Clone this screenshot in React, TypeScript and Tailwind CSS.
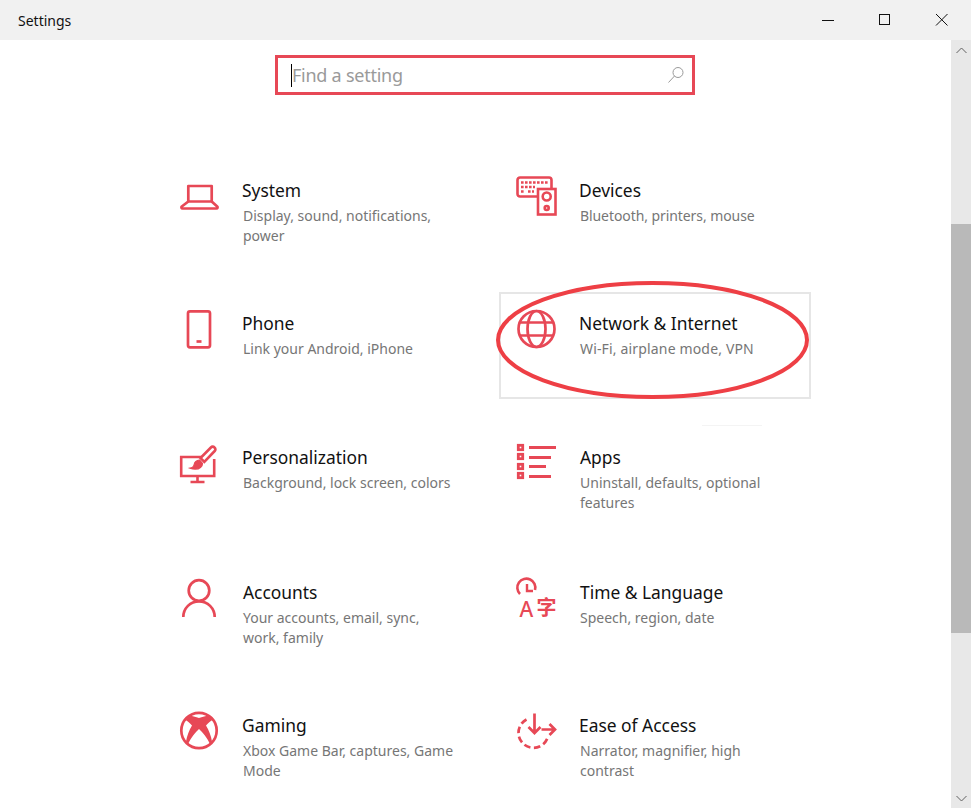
import React from "react";

const C = "#e74856";

const Icons: Record<string, React.ReactNode> = {
  system: (
    <g fill="none" stroke={C} strokeWidth="2.7" strokeLinejoin="round">
      <rect x="10.300" y="10" width="23.400" height="15.500" />
      <path d="M10.300 25.500 3.800 30.500c-.8.8-.4 2 .8 2h33.800c1.200 0 1.600-1.200.8-2L33.700 25.500" />
    </g>
  ),
  phone: (
    <g fill="none" stroke={C} strokeWidth="2.700">
      <rect x="10" y="1.300" width="22" height="36" rx="2" />
      <path d="M18.500 31.500h5" />
    </g>
  ),
  devices: (
    <g fill="none" stroke={C} strokeWidth="2.600">
      <path d="M22 20.500H5a2.500 2.500 0 0 1-2.500-2.500V4A2.500 2.500 0 0 1 5 1.500h29a2.500 2.500 0 0 1 2.500 2.500v8" />
      <rect x="23" y="13" width="17.500" height="25.500" />
      <circle cx="31.700" cy="20.500" r="4" />
      <circle cx="31.700" cy="32" r="2" />
      <path d="M6 6.500h27M6 11h14M6 15.500h4M13 15.500h6" strokeWidth="2.400" strokeDasharray="2.600 1.400" />
    </g>
  ),
  network: (
    <g fill="none" stroke={C} strokeWidth="2.700">
      <circle cx="21.500" cy="19" r="18" />
      <ellipse cx="21.500" cy="19" rx="9" ry="18" />
      <path d="M5 12.500h33M5 25.500h33" />
    </g>
  ),
  personalization: (
    <g fill="none" stroke={C} strokeWidth="2.600">
      <path d="M24 13H3.200v19h33V15" />
      <path d="M19.500 32v6M12.500 38h14" />
      <path d="M36.500 3.500c-1.300-1.300-2.600-1-3.600 0L22.500 14l3.800 3.800L36.700 7c1-1 1-2.400-.2-3.500z" />
      <path d="M21.500 16c-3 .3-4.800 1.600-5.200 4-.3 2.300-1.400 3.600-4.300 4.200 4 1.500 8.500 1 10.800-1 1.300-1.300 1.700-2.600 1.700-3.700z" fill={C} stroke={C} strokeWidth="1.200" />
    </g>
  ),
  apps: (
    <g fill="none" stroke={C} strokeWidth="2.800">
      <rect x="3.300" y="1.300" width="4.400" height="4.400" />
      <rect x="3.300" y="10.300" width="4.400" height="4.400" />
      <rect x="3.300" y="20.300" width="4.400" height="4.400" />
      <rect x="3.300" y="29.300" width="4.400" height="4.400" />
      <path d="M14 3.500h27M14 13.500h22M14 22.500h17M14 32.500h22" />
    </g>
  ),
  accounts: (
    <g fill="none" stroke={C} strokeWidth="2.700">
      <circle cx="21" cy="11.500" r="10.300" />
      <path d="M5.300 38a15.700 15.700 0 0 1 31.400 0" />
    </g>
  ),
  time: (
    <g fill="none" stroke={C}>
      <path d="M5 15A9 9 0 1 1 20 11" strokeWidth="2.600" />
      <path d="M12 5v7h6" strokeWidth="2.400" />
      <text x="4.500" y="38" fontSize="21" fontWeight="500" fill={C} stroke="none" fontFamily="'Noto Sans', sans-serif">A</text>
      <text x="21.500" y="36" fontSize="20" fontWeight="700" fill={C} stroke="none" fontFamily="'Noto Sans CJK SC', sans-serif">字</text>
    </g>
  ),
  gaming: (
    <g>
      <circle cx="21" cy="18.500" r="17.700" fill="none" stroke={C} strokeWidth="2.700" />
      <path d="M10 3.500C14 3.500 18 5 21 6 24 5 28 3.500 32 3.500L35.500 7C33 9 30 11 28 13.500 31 18 33 24 34 29.500L32 32C29 26 25 20.500 21 17 17 20.500 13 26 10 32L8 29.500C9 24 11 18 14 13.500 12 11 9 9 6.500 7z" fill={C} />
    </g>
  ),
  ease: (
    <g fill="none" stroke={C} strokeWidth="2.700">
      <path d="M11.500 7.500A15 15 0 1 0 33 24.500" strokeDasharray="6.500 3.500" />
      <path d="M19.500 1.500v19M13.500 15l6 6 6-6" />
      <path d="M26.500 17.500h13M34.500 12l5.500 5.500-5.500 5.500" />
    </g>
  ),
};

type Item = { id: string; title: string; sub: string; tx?: string; sx?: string; ic?: string; active?: boolean };

const items: Item[] = [
  { id: "system", title: "System", sub: "Display, sound, notifications, power", tx: "-ml-px" },
  { id: "devices", title: "Devices", sub: "Bluetooth, printers, mouse", tx: "-ml-px", sx: "tracking-[-0.08px]" },
  { id: "phone", title: "Phone", sub: "Link your Android, iPhone", tx: "-ml-px", ic: "mt-px" },
  { id: "network", title: "Network & Internet", sub: "Wi-Fi, airplane mode, VPN", tx: "-ml-px", sx: "tracking-[0.16px]", ic: "mt-px", active: true },
  { id: "personalization", title: "Personalization", sub: "Background, lock screen, colors", tx: "-ml-px", ic: "mt-px" },
  { id: "apps", title: "Apps", sub: "Uninstall, defaults, optional features", ic: "mt-px" },
  { id: "accounts", title: "Accounts", sub: "Your accounts, email, sync, work, family", ic: "mt-px" },
  { id: "time", title: "Time & Language", sub: "Speech, region, date", ic: "mt-px" },
  { id: "gaming", title: "Gaming", sub: "Xbox Game Bar, captures, Game Mode", tx: "-ml-px", ic: "mt-px" },
  { id: "ease", title: "Ease of Access", sub: "Narrator, magnifier, high contrast", tx: "-ml-px", ic: "mt-px" },
];

function Card({ item }: { item: Item }) {
  return (
    <div
      className={`relative flex h-[107px] w-[312px] border-2 pl-[14px] ${
        item.active ? "mt-px border-[#e6e6e6] pt-[15px]" : "border-transparent pt-[16px]"
      }`}
    >
      <svg width="44" height="44" viewBox="0 0 44 44" className={`shrink-0 overflow-visible ${item.ic ?? ""}`}>
        {Icons[item.id]}
      </svg>
      <div className="ml-[21px] w-[214px]">
        <div className={`h-[28px] text-[17.4px] leading-[28px] whitespace-nowrap text-[#111111] ${item.tx ?? ""}`}>
          {item.title}
        </div>
        <div className={`mt-[2px] text-[14px] leading-[20px] text-[#767676] ${item.sx ?? ""}`}>{item.sub}</div>
      </div>
      {item.active && (
        <>
          <svg width="320" height="124" viewBox="0 0 320 124" className="absolute left-[-8px] top-[-14px] overflow-visible">
            <ellipse cx="159.500" cy="60" rx="154.500" ry="57" fill="none" stroke="#ee3f45" strokeWidth="4" />
          </svg>
          <div className="absolute left-[201px] top-[131px] h-px w-[60px] bg-[#f4f4f4]" />
        </>
      )}
    </div>
  );
}

export default function App() {
  return (
    <div className="flex h-[808px] w-[971px] flex-col overflow-hidden bg-white font-['Noto_Sans',sans-serif]">
      <header className="flex h-[40px] shrink-0 items-center bg-[#f1f1f1]">
        <span className="ml-[18px] text-[14px] text-[#111111]">Settings</span>
        <svg width="130" height="14" viewBox="0 0 130 14" className="ml-auto mr-[19px]" fill="none" stroke="#111111" strokeWidth="1">
          <path d="M0 7.500h12" />
          <rect x="57.500" y="1.500" width="10" height="10" />
          <path d="M114 1l11.500 11.500M125.500 1L114 12.500" />
        </svg>
      </header>
      <div className="flex min-h-0 flex-1">
        <main className="min-w-0 flex-1">
          <div className="relative ml-[275px] mt-[15px] flex h-[40px] w-[420px] items-center border-[3px] border-[#e74856] pl-[13px] pr-[7px]">
            <span className="h-[23px] w-px bg-black" />
            <span className="text-[18px] leading-[23px] tracking-[-0.25px] text-[#9a9a9a]">Find a setting</span>
            <svg width="18" height="18" viewBox="0 0 18 18" className="ml-auto" fill="none" stroke="#9a9a9a" strokeWidth="1">
              <circle cx="11" cy="6.500" r="5" />
              <path d="M7.500 10 1.500 16.500" />
            </svg>
          </div>
          <div className="ml-[162px] mt-[63px] grid grid-cols-[337px_312px] grid-rows-[133px_134px_135px_133px_107px]">
            {items.map((it) => (
              <Card key={it.id} item={it} />
            ))}
          </div>
        </main>
        <aside className="flex w-[20px] shrink-0 flex-col bg-[#e8e8e8]">
          <div className="flex h-[20px] items-center justify-center">
            <svg width="11" height="7" viewBox="0 0 11 7" fill="none" stroke="#606060" strokeWidth="1">
              <path d="M.500 6 5.500 1l5 5" />
            </svg>
          </div>
          <div className="mt-[164px] h-[409px] bg-[#b9b9b9]" />
          <div className="mt-auto flex h-[20px] items-center justify-center">
            <svg width="11" height="7" viewBox="0 0 11 7" fill="none" stroke="#606060" strokeWidth="1">
              <path d="M.500 1l5 5 5-5" />
            </svg>
          </div>
        </aside>
      </div>
    </div>
  );
}
